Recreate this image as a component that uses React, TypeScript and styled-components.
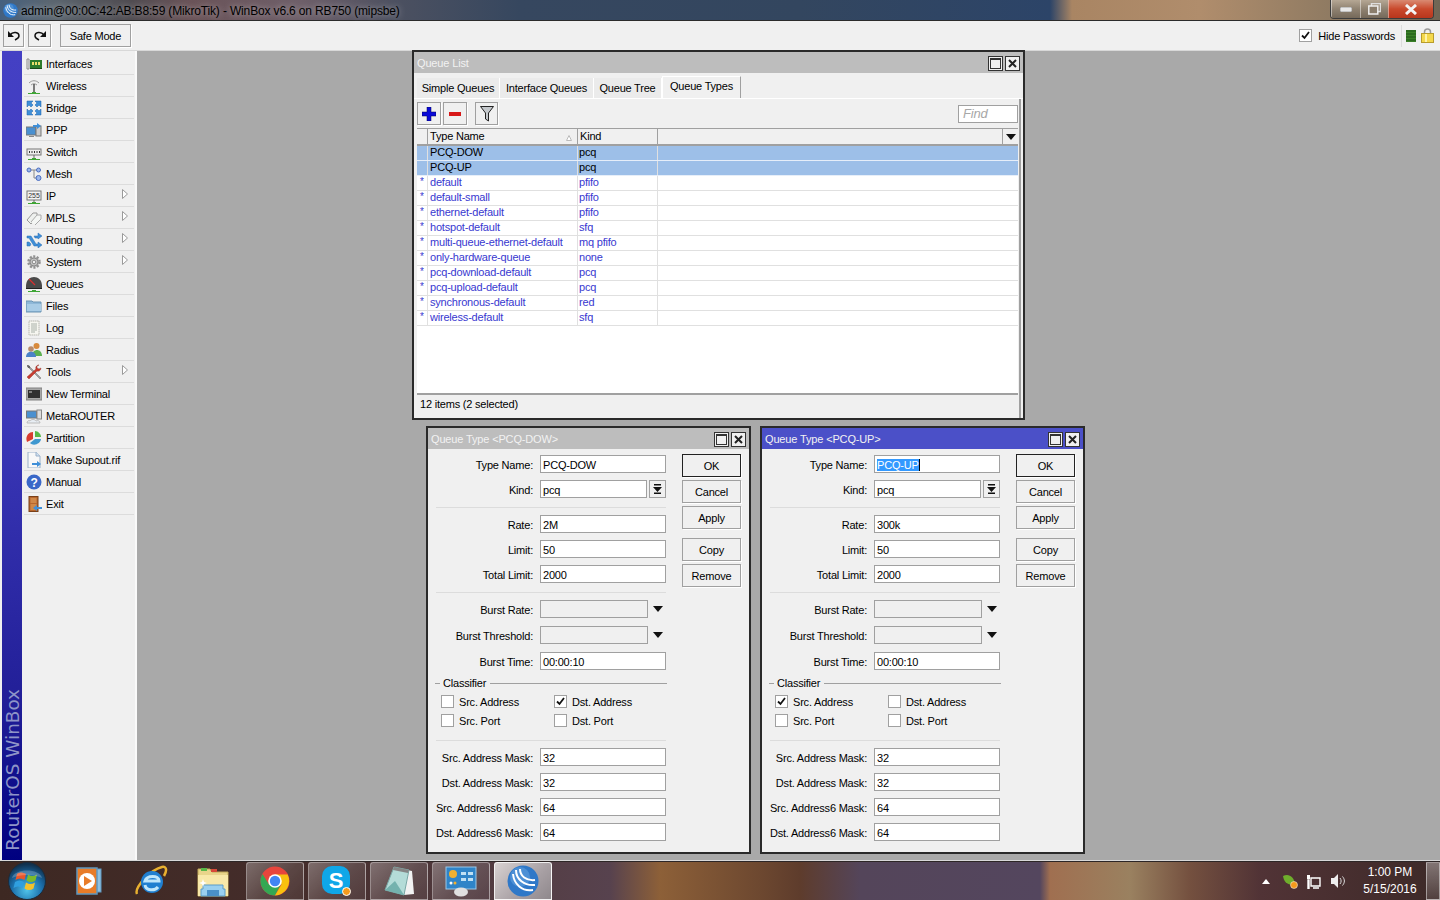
import { FC, ReactNode } from 'react'
import styled, { createGlobalStyle } from 'styled-components'

const GlobalStyle = createGlobalStyle`
  html, body { margin: 0; padding: 0; background: #a9a9a9; }
  body { font-family: "Liberation Sans", Arial, sans-serif; font-size: 11px; color: #000; }
`

const Root = styled.div`
  position: relative;
  width: 1440px;
  height: 900px;
  overflow: hidden;
  display: flex;
  flex-direction: column;
  letter-spacing: -0.2px;
`

/* ---------- host window chrome ---------- */

const TitleBar = styled.header`
  height: 20px;
  display: flex;
  align-items: center;
  gap: 3px;
  padding-left: 3px;
  border-bottom: 1px solid #2b2b2b;
  background: linear-gradient(90deg, #45607f 0, #5b6670 50px, #4f4b50 130px, #6a5358 190px, #6e5f69 300px, #4b5060 400px, #36475f 520px, #33465f 800px, #2c4468 1050px, #a98563 1072px, #b08d6c 1200px, #8e7a62 1335px, #6f6655 1440px);
`

const TitleText = styled.span`
  font-size: 12px;
  letter-spacing: -0.15px;
  padding-top: 1px;
  color: #000;
  text-shadow: 0 0 6px rgba(255, 255, 255, 0.55);
`

const CaptionButtons = styled.div`
  margin-left: auto;
  margin-right: 6px;
  align-self: flex-start;
  display: flex;
  height: 18px;
  border: 1px solid #3c3c3c;
  border-top: 0;
  border-radius: 0 0 4px 4px;
  overflow: hidden;
`

const CaptionButton = styled.div<{ $w: number; $close?: boolean }>`
  width: ${(p) => p.$w}px;
  display: flex;
  align-items: center;
  justify-content: center;
  border-left: 1px solid rgba(255, 255, 255, 0.45);
  background: ${(p) =>
    p.$close
      ? 'linear-gradient(180deg, #d98a72 0, #c9492c 50%, #b8361c 100%)'
      : 'linear-gradient(180deg, #b5a794 0, #8f8271 50%, #75695a 100%)'};
`

const TopToolbar = styled.div`
  height: 29px;
  display: flex;
  align-items: center;
  padding: 0 6px 0 3px;
  background: #f0f0f0;
  border-bottom: 1px solid #d8d8d8;
`

const ToolButton = styled.button<{ $w: number; $ml?: number }>`
  width: ${(p) => p.$w}px;
  height: 23px;
  margin-left: ${(p) => p.$ml ?? 0}px;
  padding: 0;
  display: flex;
  align-items: center;
  justify-content: center;
  font: inherit;
  letter-spacing: inherit;
  color: #000;
  background: #f0f0f0;
  border: 1px solid #a0a0a0;
  box-shadow: 1px 1px 0 #fff;
`

const HideGroup = styled.div`
  margin-left: auto;
  display: flex;
  align-items: center;
`

const Check = styled.span`
  width: 11px;
  height: 11px;
  flex: none;
  display: flex;
  align-items: center;
  justify-content: center;
  background: #fff;
  border: 1px solid #a0a0a0;
`

const HideLabel = styled.span`
  margin-left: 6px;
`

const ThinRule = styled.span`
  width: 1px;
  height: 22px;
  margin: 0 4px 0 6px;
  background: #dcdcdc;
`

const GreenBlock = styled.span`
  width: 10px;
  height: 12px;
  margin-right: 5px;
  background: repeating-linear-gradient(180deg, #2c6b1f 0, #2c6b1f 2px, #3b8028 2px, #3b8028 3px);
`

/* ---------- sidebar ---------- */

const Main = styled.div`
  flex: 1;
  display: flex;
  min-height: 0;
`

const Sidebar = styled.nav`
  width: 137px;
  flex: none;
  display: flex;
  background: #f0f0f0;
  padding-left: 2px;
  box-sizing: border-box;
  border-right: 2px solid #fafafa;
`

const BrandStrip = styled.div`
  width: 20px;
  flex: none;
  display: flex;
  flex-direction: column;
  justify-content: flex-end;
  align-items: center;
  padding-bottom: 9px;
  box-sizing: border-box;
  background: linear-gradient(180deg, #4440c4 0, #3b38b8 45%, #221f98 80%, #000080 100%);
`

const BrandText = styled.span`
  writing-mode: vertical-rl;
  transform: rotate(180deg);
  font-family: "DejaVu Sans", Verdana, sans-serif;
  font-size: 18.4px;
  letter-spacing: 0;
  color: #8f95c8;
  white-space: nowrap;
`

const Menu = styled.ul`
  flex: 1;
  list-style: none;
  margin: 2px 1px 0 2px;
  padding: 0;
`

const MenuRow = styled.li`
  height: 21px;
  display: flex;
  align-items: center;
  border-bottom: 1px solid #dcdcdc;
  padding-left: 2px;
`

const MenuIcon = styled.span`
  width: 16px;
  height: 16px;
  flex: none;
  display: flex;
  margin-right: 4px;
`

const SubArrow = styled.span`
  margin-left: auto;
  margin-right: 6px;
  margin-top: -4px;
  display: flex;
`

const Desktop = styled.div`
  flex: 1;
  background: #a9a9a9;
`

/* ---------- MDI windows ---------- */

const Win = styled.section<{ $x: number; $y: number; $w: number; $h: number }>`
  position: absolute;
  left: ${(p) => p.$x}px;
  top: ${(p) => p.$y}px;
  width: ${(p) => p.$w}px;
  height: ${(p) => p.$h}px;
  box-sizing: border-box;
  display: flex;
  flex-direction: column;
  background: #f0f0f0;
  border: 2px solid #2a2a2a;
`

const WinTitle = styled.div<{ $active?: boolean }>`
  height: 21px;
  flex: none;
  display: flex;
  align-items: center;
  gap: 2px;
  padding: 1px 3px 0 3px;
  box-sizing: border-box;
  background: ${(p) => (p.$active ? '#4b50c8' : '#bdbdbd')};
  color: #f2f2f2;
`

const WinTitleText = styled.span`
  flex: 1;
  letter-spacing: -0.15px;
`

const WinButton = styled.span`
  width: 15px;
  height: 15px;
  box-sizing: border-box;
  display: flex;
  align-items: center;
  justify-content: center;
  background: #f0f0f0;
  border: 1px solid #333;
`

/* ---------- queue list ---------- */

const Tabs = styled.div`
  height: 25px;
  flex: none;
  display: flex;
  align-items: flex-end;
  padding-left: 3px;
  border-bottom: 1px solid #fff;
`

const Tab = styled.div<{ $w: number; $active?: boolean }>`
  width: ${(p) => p.$w}px;
  height: ${(p) => (p.$active ? 22 : 20)}px;
  box-sizing: border-box;
  display: flex;
  align-items: ${(p) => (p.$active ? 'flex-start' : 'center')};
  padding-top: ${(p) => (p.$active ? 3 : 0)}px;
  justify-content: center;
  white-space: nowrap;
  background: ${(p) => (p.$active ? '#f0f0f0' : '#ebebeb')};
  border-right: 1px solid ${(p) => (p.$active ? '#a0a0a0' : '#fff')};
  border-top: ${(p) => (p.$active ? '1px solid #fff' : '0')};
  border-left: ${(p) => (p.$active ? '1px solid #fff' : '0')};
`

const ListPanel = styled.div`
  flex: 1;
  display: flex;
  flex-direction: column;
  min-height: 0;
  padding: 0 1px 5px 3px;
  margin-right: 2px;
  border-right: 2px solid #a0a0a0;
`

const ListToolbar = styled.div`
  height: 29px;
  flex: none;
  display: flex;
  align-items: center;
  box-sizing: border-box;
`

const FindBox = styled.div`
  width: 60px;
  height: 18px;
  margin-left: auto;
  box-sizing: border-box;
  padding-left: 4px;
  background: #fff;
  border: 1px solid #a0a0a0;
  font-style: italic;
  font-size: 13px;
  line-height: 15px;
  color: #a7a7a7;
`

const Table = styled.div`
  flex: 1;
  min-height: 0;
  display: flex;
  flex-direction: column;
  background: #fff;
`

const HeaderRow = styled.div`
  height: 18px;
  flex: none;
  box-sizing: border-box;
  display: grid;
  grid-template-columns: 11px 150px 80px 1fr 15px;
  background: #f0f0f0;
  border-top: 1px solid #a0a0a0;
  border-bottom: 2px solid #a0a0a0;
`

const HeaderCell = styled.div`
  position: relative;
  padding-left: 2px;
  line-height: 15px;
  border-right: 1px solid #a0a0a0;
  &:last-child { border-right: 0; }
`

const SortMark = styled.span`
  position: absolute;
  right: 5px;
  top: 6px;
  display: flex;
`

const MenuDrop = styled.div`
  display: flex;
  align-items: center;
  justify-content: center;
`

const DataRow = styled.div<{ $selected?: boolean }>`
  height: 15px;
  flex: none;
  box-sizing: border-box;
  display: grid;
  grid-template-columns: 11px 150px 80px 1fr;
  line-height: 13px;
  color: ${(p) => (p.$selected ? '#000' : '#3838d0')};
  background: ${(p) => (p.$selected ? '#9dbfe8' : '#fff')};
  border-bottom: 1px solid ${(p) => (p.$selected ? '#e6eef9' : '#e0e0e0')};
`

const DataCell = styled.div`
  padding-left: 2px;
  border-right: 1px solid #e0e0e0;
  white-space: nowrap;
  &:last-child { border-right: 0; }
`

const KindCell = styled(DataCell)`
  padding-left: 1px;
`

const Marker = styled.div`
  padding-left: 3px;
  font-size: 10px;
  line-height: 12px;
  border-right: 1px solid #e0e0e0;
`

const StatusBar = styled.div`
  height: 18px;
  flex: none;
  display: flex;
  align-items: center;
  padding-left: 3px;
  border-top: 2px solid #a0a0a0;
`

/* ---------- queue type dialog ---------- */

const DialogBody = styled.div`
  flex: 1;
  display: flex;
  min-height: 0;
  padding-top: 6px;
`

const Form = styled.div`
  width: 238px;
  flex: none;
  display: flex;
  flex-direction: column;
`

const FieldRow = styled.div<{ $mt?: number }>`
  height: 18px;
  flex: none;
  display: flex;
  align-items: center;
  margin-top: ${(p) => p.$mt ?? 0}px;
`

const Label = styled.label`
  width: 105px;
  flex: none;
  margin-right: 7px;
  padding-top: 2px;
  text-align: right;
  white-space: nowrap;
`

const Field = styled.div<{ $w?: number; $disabled?: boolean }>`
  width: ${(p) => p.$w ?? 126}px;
  height: 18px;
  flex: none;
  box-sizing: border-box;
  padding-left: 2px;
  line-height: 18px;
  white-space: nowrap;
  background: ${(p) => (p.$disabled ? '#f0f0f0' : '#fff')};
  border: 1px solid #a0a0a0;
`

const Selected = styled.span`
  background: #3399ff;
  color: #fff;
  border-right: 1px solid #000;
`

const DropButton = styled.span`
  width: 17px;
  height: 18px;
  margin-left: 2px;
  box-sizing: border-box;
  display: flex;
  align-items: center;
  justify-content: center;
  border: 1px solid #a0a0a0;
`

const DropCaret = styled.span`
  margin-left: 5px;
  display: flex;
`

const Rule = styled.div<{ $mt?: number }>`
  height: 1px;
  flex: none;
  margin: ${(p) => p.$mt ?? 9}px 0 7px 8px;
  width: 230px;
  background: #dcdcdc;
`

const LegendRow = styled.div`
  height: 14px;
  margin: 6px 0 0 7px;
  width: 232px;
  flex: none;
  display: flex;
  align-items: center;
  gap: 3px;
  &::before, &::after {
    content: '';
    height: 1px;
    background: #a0a0a0;
  }
  &::before { width: 5px; }
  &::after { flex: 1; margin-left: 1px; }
`

const CheckGrid = styled.div`
  display: grid;
  grid-template-columns: 113px 1fr;
  grid-auto-rows: 19px;
  margin: 2px 0 0 13px;
  flex: none;
`

const CheckItem = styled.div`
  display: flex;
  align-items: center;
  gap: 5px;
`

const ActionColumn = styled.div`
  width: 59px;
  margin: -1px 0 0 16px;
  flex: none;
  display: flex;
  flex-direction: column;
`

const ActionButton = styled.button<{ $mt?: number; $default?: boolean }>`
  height: 23px;
  flex: none;
  padding: 0;
  margin-top: ${(p) => p.$mt ?? 3}px;
  font: inherit;
  letter-spacing: inherit;
  color: #000;
  background: #f0f0f0;
  border: 1px solid ${(p) => (p.$default ? '#222' : '#a0a0a0')};
  box-shadow: 1px 1px 0 #fff;
`

/* ---------- taskbar ---------- */

const Taskbar = styled.footer`
  height: 40px;
  flex: none;
  box-sizing: border-box;
  display: flex;
  align-items: flex-end;
  gap: 4px;
  color: #fff;
  border-top: 1px solid #d8d8d8;
  box-shadow: inset 0 1px 0 #2d2626;
  background: linear-gradient(90deg, #3d2822 0, #452d2b 300px, #553f47 552px, #57424e 610px, #8d6038 660px, #6d4830 760px, #5e3c2c 800px, #54455a 860px, #54465e 1040px, #a06f50 1050px, #9a8160 1130px, #74503f 1190px, #513336 1260px, #3d2a28 1440px);
`

const StartSlot = styled.div`
  width: 56px;
  height: 38px;
  flex: none;
  display: flex;
  align-items: center;
  padding-left: 8px;
  box-sizing: border-box;
`

const TaskButton = styled.div<{ $boxed?: boolean; $active?: boolean }>`
  width: 58px;
  height: 38px;
  flex: none;
  box-sizing: border-box;
  display: flex;
  align-items: center;
  justify-content: center;
  ${(p) =>
    p.$boxed
      ? `border: 1px solid rgba(255,255,255,${p.$active ? 0.85 : 0.4}); border-radius: 3px 3px 0 0;`
      : ''}
  background: ${(p) =>
    p.$active
      ? 'linear-gradient(135deg, #d8d2d2 0, #a8a0a4 60%, #8f888c 100%)'
      : p.$boxed
        ? 'linear-gradient(135deg, rgba(255,255,255,0.3) 0, rgba(255,255,255,0.12) 55%, rgba(255,255,255,0.05) 100%)'
        : 'transparent'};
`

const Tray = styled.div`
  margin-left: auto;
  height: 38px;
  display: flex;
  align-items: center;
`

const TrayIcon = styled.span<{ $w: number }>`
  width: ${(p) => p.$w}px;
  display: flex;
  justify-content: center;
`

const Clock = styled.div`
  width: 72px;
  margin-left: 4px;
  text-align: center;
  font-size: 12px;
  line-height: 17px;
  letter-spacing: 0;
`

const ShowDesktop = styled.div`
  width: 14px;
  height: 38px;
  box-sizing: border-box;
  border: 1px solid rgba(255, 255, 255, 0.45);
  background: linear-gradient(180deg, rgba(255, 255, 255, 0.35), rgba(255, 255, 255, 0.1));
`

/* ---------- drawings ---------- */

const Ico: FC<{ s?: number; w?: number; h?: number; children: ReactNode }> = ({ s = 16, w, h, children }) => (
  <svg width={w ?? s} height={h ?? s} viewBox={`0 0 ${w ?? s} ${h ?? s}`}>{children}</svg>
)

const GreenBase = () => <path d="M2 15h12v1H2z M6 14h4v2H6z" fill="#3fa535" />

const menuIcons: Record<string, ReactNode> = {
  Interfaces: (
    <Ico>
      <path d="M1 3h2v10H1z" fill="none" stroke="#8a8a8a" />
      <rect x="4" y="4" width="12" height="8" fill="#2c7a2c" />
      <path d="M6 6h2v3H6zM9 6h2v3H9zM12 6h2v3h-2z" fill="#e8dd6a" />
      <path d="M4 12h12v1H4z" fill="#184a18" />
    </Ico>
  ),
  Wireless: (
    <Ico>
      <path d="M3 5c3-3 7-3 10 0M5 7c2-1.600 4-1.600 6 0" fill="none" stroke="#9a9a9a" />
      <path d="M8 6v8" stroke="#555" strokeWidth="1.500" />
      <GreenBase />
    </Ico>
  ),
  Bridge: (
    <Ico>
      <path d="M1 1h6L5 3l2 2-2 2-2-2-2 2zM15 1v6l-2-2-2 2-2-2 2-2-2-2zM1 15V9l2 2 2-2 2 2-2 2 2 2zM15 15H9l2-2-2-2 2-2 2 2 2-2z" fill="#3f8fd8" stroke="#1e62a8" strokeWidth="0.500" />
    </Ico>
  ),
  PPP: (
    <Ico>
      <rect x="0" y="5" width="10" height="8" fill="#4a90d0" stroke="#777" />
      <rect x="10" y="4" width="5" height="10" fill="#ccc" stroke="#777" />
      <path d="M3 14h5v1H3z" fill="#888" />
      <path d="M7 3h4V1l4 3-4 3V5H7z" fill="#3f8fd8" />
    </Ico>
  ),
  Switch: (
    <Ico>
      <rect x="1" y="5" width="14" height="6" fill="#eee" stroke="#777" />
      <path d="M3 7h1v2H3zM5.500 7h1v2h-1zM8 7h1v2H8zM10.500 7h1v2h-1zM13 7h1v2h-1z" fill="#333" />
      <path d="M8 11v3" stroke="#666" />
      <GreenBase />
    </Ico>
  ),
  Mesh: (
    <Ico>
      <path d="M4 4h4v8h4M8 4h4" fill="none" stroke="#888" />
      <circle cx="3" cy="4" r="2" fill="#9db8ea" stroke="#4a6cc0" />
      <circle cx="12.500" cy="4" r="2" fill="#9db8ea" stroke="#4a6cc0" />
      <circle cx="12.500" cy="12" r="2.500" fill="#9db8ea" stroke="#4a6cc0" />
    </Ico>
  ),
  IP: (
    <Ico>
      <rect x="1" y="3" width="14" height="9" fill="#f4f4f4" stroke="#777" />
      <text x="8" y="10" textAnchor="middle" fontSize="7" letterSpacing="0" fill="#333" fontFamily="Liberation Sans">255</text>
      <path d="M8 12v2" stroke="#666" />
      <GreenBase />
    </Ico>
  ),
  MPLS: (
    <Ico>
      <path d="M1 10l6-7h4v4l-6 7z" fill="#eef0ee" stroke="#999" />
      <path d="M5 12l6-7h4v4l-6 6" fill="#f4f6f4" stroke="#aaa" />
    </Ico>
  ),
  Routing: (
    <Ico>
      <path d="M1 4h4l5 8h2v-2l4 3-4 3v-2H8L3 6H1z" fill="#3f8fd8" stroke="#2a6cb0" strokeWidth="0.500" />
      <path d="M1 10h2l2 2-1 2H1zM8 4h4V1l4 3-4 3V6h-3z" fill="#3f8fd8" stroke="#2a6cb0" strokeWidth="0.500" />
    </Ico>
  ),
  System: (
    <Ico>
      <circle cx="8" cy="8" r="5.500" fill="#c8c8c8" stroke="#909090" strokeWidth="2.500" strokeDasharray="2 1.500" />
      <circle cx="8" cy="8" r="4" fill="#c4c4c4" stroke="#8a8a8a" />
      <circle cx="8" cy="8" r="1.800" fill="#eee" stroke="#8a8a8a" />
    </Ico>
  ),
  Queues: (
    <Ico>
      <path d="M0 10C0-2 16-2 16 10v3H0z" fill="#4a4a4a" />
      <path d="M3 3l6 6" stroke="#d83030" strokeWidth="1.200" />
      <path d="M0 12h16v1H0z" fill="#222" />
      <GreenBase />
    </Ico>
  ),
  Files: (
    <Ico>
      <path d="M0 3h6l1 1h8v10H0z" fill="#8fb8d8" stroke="#6a94b4" />
      <path d="M1 6h14v7H1z" fill="#a9cce6" />
    </Ico>
  ),
  Log: (
    <Ico>
      <path d="M3 1h10v14H3z" fill="#f6f6f0" stroke="#b8b8b0" strokeDasharray="1.500 .5" />
      <path d="M5 4h6M5 6h6M5 8h6M5 10h6M5 12h4" stroke="#a8b0a8" />
    </Ico>
  ),
  Radius: (
    <Ico>
      <circle cx="10.500" cy="4" r="3" fill="#d88a3c" />
      <path d="M6 14c0-8 10-8 10 0z" fill="#5cb050" />
      <circle cx="5" cy="7" r="2.800" fill="#b88a6a" />
      <path d="M0 15c0-7 10-7 10 0z" fill="#4a82c8" />
    </Ico>
  ),
  Tools: (
    <Ico>
      <path d="M2 1l13 13-1 1L1 2z" fill="#a0a0a0" stroke="#777" strokeWidth="0.500" />
      <path d="M1 1l3 1v2H2z" fill="#666" />
      <path d="M13 1c-2 0-4 2-3 4L1 13l2 2 8-8c3 1 4-2 4-3l-2 1-2-1 0-2z" fill="#c83c30" stroke="#8a2a20" strokeWidth="0.400" />
    </Ico>
  ),
  'New Terminal': (
    <Ico>
      <rect x="0" y="2" width="16" height="12" fill="#a8a8a8" stroke="#808080" />
      <rect x="2" y="4" width="12" height="8" fill="#303030" />
      <path d="M3 6h3" stroke="#ccc" />
    </Ico>
  ),
  MetaROUTER: (
    <Ico>
      <rect x="0.500" y="3" width="10" height="7" fill="#4a90d0" stroke="#777" />
      <rect x="11" y="2" width="4.500" height="9" fill="#ddd" stroke="#888" />
      <path d="M1 15c0-2 2-3 3-2 1-2 5-2 6 0 2-1 4 0 4 2z" fill="#e8eef4" stroke="#bbb" />
    </Ico>
  ),
  Partition: (
    <Ico>
      <path d="M7 2v7l-6 3C-1 7 2 2 7 2z" fill="#d83c30" />
      <path d="M9 1c3 0 6 3 6 6H9z" fill="#58b848" />
      <path d="M15 9c0 4-7 8-11 4l5-4z" fill="#3f98d0" />
    </Ico>
  ),
  'Make Supout.rif': (
    <Ico>
      <path d="M2 0h8l4 4v12H2z" fill="#f8f8f8" stroke="#9ab0c8" />
      <path d="M10 0v4h4" fill="#cfe0f0" stroke="#9ab0c8" />
      <path d="M6 11h5V9l4 3-4 3v-2H6z" fill="#3f8fd8" />
    </Ico>
  ),
  Manual: (
    <Ico>
      <circle cx="8" cy="8" r="7.500" fill="#3a68c8" />
      <text x="8" y="12.500" textAnchor="middle" fontSize="12" fontWeight="700" fill="#fff" fontFamily="Liberation Sans">?</text>
    </Ico>
  ),
  Exit: (
    <Ico>
      <rect x="3" y="0.500" width="9" height="15" fill="#b8662c" stroke="#7a4018" />
      <rect x="4.500" y="2" width="6" height="5" fill="#d08848" />
      <rect x="4.500" y="8" width="6" height="6" fill="#d08848" />
      <path d="M16 11h-5V9l-4 3 4 3v-2h5z" fill="#3f8fd8" />
    </Ico>
  ),
}

const UndoIcon = () => (
  <Ico s={14}>
    <path d="M3 6c3-4 9-3 9 1 0 2-2 3-4 4" fill="none" stroke="#111" strokeWidth="1.500" />
    <path d="M1 2v6h6z" fill="#111" />
  </Ico>
)

const RedoIcon = () => (
  <Ico s={14}>
    <path d="M11 6C8 2 2 3 2 7c0 2 2 3 4 4" fill="none" stroke="#111" strokeWidth="1.500" />
    <path d="M13 2v6H7z" fill="#111" />
  </Ico>
)

const CheckMark = () => (
  <svg width="9" height="9" viewBox="0 0 9 9"><path d="M1 4.500l2.500 2.500L8 1" fill="none" stroke="#111" strokeWidth="1.800" /></svg>
)

const MaxGlyph = () => (
  <svg width="11" height="11" viewBox="0 0 11 11"><rect x="0.500" y="0.500" width="10" height="10" fill="none" stroke="#333" /><path d="M0 1h11" stroke="#333" strokeWidth="2" /></svg>
)

const CloseGlyph = () => (
  <svg width="9" height="9" viewBox="0 0 9 9"><path d="M1 1l7 7M8 1l-7 7" stroke="#222" strokeWidth="2" /></svg>
)

const DownCaret = () => (
  <svg width="10" height="6" viewBox="0 0 10 6"><path d="M0 0h10L5 6z" fill="#111" /></svg>
)

const DropGlyph = () => (
  <svg width="9" height="10" viewBox="0 0 9 10"><path d="M1 0h7v1.500H1zM0 3h9L4.500 8z" fill="#111" /><path d="M3 3h3v3H3zM1 8.500h7V10H1z" fill="#111" /></svg>
)

const WinboxLogo: FC<{ s: number }> = ({ s }) => (
  <svg width={s} height={s} viewBox="0 0 32 32">
    <circle cx="16" cy="16" r="15.500" fill="#2f78c8" />
    <circle cx="13" cy="12" r="10" fill="#6aa8e4" opacity="0.500" />
    <path d="M9 5c0 9 8 16 19 15M6 9c1 10 9 18 20 16M13 4c0 7 6 12 15 11" fill="none" stroke="#fff" strokeWidth="2" />
  </svg>
)

const StartOrb = () => (
  <svg width="38" height="38" viewBox="0 0 38 38">
    <defs>
      <radialGradient id="orb" cx="50%" cy="75%" r="70%">
        <stop offset="0" stopColor="#4fc3ea" />
        <stop offset="0.600" stopColor="#1a6ca8" />
        <stop offset="1" stopColor="#10324f" />
      </radialGradient>
    </defs>
    <circle cx="19" cy="19" r="18.500" fill="url(#orb)" stroke="#1c2c3c" />
    <path d="M9 12c3-2 5-2 9 0l-1.500 6c-3-2-6-2-9 0z" fill="#e8562a" />
    <path d="M20 12.500c3 2 6 2 9 0l-1.500 6c-3 2-6 2-9 0z" fill="#7cba2c" />
    <path d="M7 20c3-2 6-2 9 0l-1.500 6c-3-2-6-2-9 0z" fill="#2f9fe0" />
    <path d="M18 20.500c3 2 6 2 9 0l-1.500 6c-3 2-6 2-9 0z" fill="#f4c22c" />
    <path d="M4 16C6 6 32 6 34 16 26 12 12 12 4 16z" fill="#fff" opacity="0.220" />
  </svg>
)

const MediaIcon = () => (
  <Ico w={26} h={28}>
    <rect x="6" y="2" width="19" height="23" fill="#8fc0e0" stroke="#5f98c0" />
    <rect x="1" y="1" width="20" height="26" fill="#e87c28" stroke="#5f98c0" strokeWidth="1.500" />
    <circle cx="11" cy="14" r="8" fill="#fff" />
    <path d="M8 9l8 5-8 5z" fill="#e87c28" />
  </Ico>
)

const IeIcon = () => (
  <svg width="34" height="34" viewBox="0 0 34 34">
    <path d="M3 30C0 24 16 6 28 3c5-1 5 4 2 9" fill="none" stroke="#e8b030" strokeWidth="2.500" />
    <circle cx="18" cy="18" r="11" fill="#1f7fd0" />
    <path d="M11 17h14c0-6-12-6-14 0zM11 21c1 6 10 6 13 2" fill="none" stroke="#bfe6fa" strokeWidth="3" />
  </svg>
)

const FolderIcon = () => (
  <svg width="32" height="32" viewBox="0 0 32 32">
    <path d="M1 4h12l2 3h16v24H1z" fill="#e8d48a" stroke="#c0a858" />
    <path d="M4 3h6v3H4z" fill="#58b848" />
    <path d="M14 4h6v3h-6z" fill="#d84838" />
    <path d="M1 10h30v21H1z" fill="#f8e8a8" />
    <path d="M6 20h20v4h2v7H4v-7h2z" fill="#9ad0f0" stroke="#5a9cc8" />
    <path d="M10 25h12v6H10z" fill="#4a90c8" />
    <path d="M6 14l1 3 3 1-3 1-1 3-1-3-3-1 3-1z" fill="#fff" />
  </svg>
)

const ChromeIcon = () => (
  <svg width="30" height="30" viewBox="0 0 30 30">
    <circle cx="15" cy="15" r="14.500" fill="#e8453c" />
    <path d="M15 15L2.400 22.300A14.500 14.500 0 0 0 15 29.500L21.500 17z" fill="#34a853" />
    <path d="M15 8.500h12.600A14.500 14.500 0 0 1 15 29.500l6.500-11z" fill="#f9c10e" />
    <path d="M2.500 8l6.800 11L2.400 22.300A14.500 14.500 0 0 1 2.500 8z" fill="#34a853" />
    <circle cx="15" cy="15" r="6.800" fill="#fff" />
    <circle cx="15" cy="15" r="5.200" fill="#4285f4" />
  </svg>
)

const SkypeIcon = () => (
  <svg width="32" height="32" viewBox="0 0 32 32">
    <rect x="1" y="1" width="28" height="28" rx="10" fill="#0fa7e8" />
    <text x="15" y="23" textAnchor="middle" fontSize="22" fontWeight="700" fill="#fff" fontFamily="Liberation Sans">S</text>
    <circle cx="25.500" cy="26.500" r="4" fill="#f59a1c" stroke="#fff" />
  </svg>
)

const NotepadIcon = () => (
  <svg width="32" height="32" viewBox="0 0 32 32">
    <path d="M24 5l5 1 2 23-10 1z" fill="#f2f2f2" />
    <path d="M11 2l15 3-5 25L2 25z" fill="#b4dcd8" stroke="#7aa8a6" />
    <path d="M2 25l10-9 9 14z" fill="#74b2ae" />
    <path d="M11 2l15 3-1 3-15-3z" fill="#858585" />
  </svg>
)

const ControlIcon = () => (
  <svg width="32" height="32" viewBox="0 0 32 32">
    <rect x="1" y="2" width="30" height="22" fill="#2f84c8" stroke="#9cc8e8" />
    <circle cx="8" cy="9" r="4" fill="#f0b030" />
    <path d="M16 7h5v3h-5zM23 7h5v3h-5zM16 13h5v3h-5zM23 13h5v3h-5z" fill="#bfe0f4" />
    <circle cx="6" cy="18" r="1.500" fill="#fff" />
    <circle cx="10" cy="18" r="1.500" fill="#f0b030" />
    <ellipse cx="16" cy="27" rx="7" ry="4.500" fill="#e0e0e0" />
  </svg>
)

const LockIcon = () => (
  <svg width="13" height="15" viewBox="0 0 13 15">
    <path d="M3.500 6V4a3 3 0 0 1 6 0V6" fill="none" stroke="#9a9a9a" strokeWidth="1.500" />
    <rect x="0.500" y="5.500" width="12" height="9" fill="#f4d84c" stroke="#b89c2c" />
    <path d="M5 6v8" stroke="#fff3a8" strokeWidth="2" />
  </svg>
)

const SubTriangle = () => (
  <svg width="6" height="10" viewBox="0 0 6 10"><path d="M.5.500l5 4.500-5 4.500z" fill="#fff" stroke="#9a9a9a" /></svg>
)

/* ---------- data ---------- */

const menuItems: { name: string; sub?: boolean }[] = [
  { name: 'Interfaces' },
  { name: 'Wireless' },
  { name: 'Bridge' },
  { name: 'PPP' },
  { name: 'Switch' },
  { name: 'Mesh' },
  { name: 'IP', sub: true },
  { name: 'MPLS', sub: true },
  { name: 'Routing', sub: true },
  { name: 'System', sub: true },
  { name: 'Queues' },
  { name: 'Files' },
  { name: 'Log' },
  { name: 'Radius' },
  { name: 'Tools', sub: true },
  { name: 'New Terminal' },
  { name: 'MetaROUTER' },
  { name: 'Partition' },
  { name: 'Make Supout.rif' },
  { name: 'Manual' },
  { name: 'Exit' },
]

const queueRows = [
  ['PCQ-DOW', 'pcq', 'sel'],
  ['PCQ-UP', 'pcq', 'sel'],
  ['default', 'pfifo'],
  ['default-small', 'pfifo'],
  ['ethernet-default', 'pfifo'],
  ['hotspot-default', 'sfq'],
  ['multi-queue-ethernet-default', 'mq pfifo'],
  ['only-hardware-queue', 'none'],
  ['pcq-download-default', 'pcq'],
  ['pcq-upload-default', 'pcq'],
  ['synchronous-default', 'red'],
  ['wireless-default', 'sfq'],
]

const WinControls = () => (
  <>
    <WinButton><MaxGlyph /></WinButton>
    <WinButton><CloseGlyph /></WinButton>
  </>
)

const CheckField: FC<{ on?: boolean; label: string }> = ({ on, label }) => (
  <CheckItem>
    <Check>{on && <CheckMark />}</Check>
    {label}
  </CheckItem>
)

type DialogProps = {
  x: number
  name: string
  rate: string
  active?: boolean
  src?: boolean
  dst?: boolean
}

const QueueDialog: FC<DialogProps> = ({ x, name, rate, active, src, dst }) => (
  <Win $x={x} $y={426} $w={325} $h={428}>
    <WinTitle $active={active}>
      <WinTitleText>{`Queue Type <${name}>`}</WinTitleText>
      <WinControls />
    </WinTitle>
    <DialogBody>
      <Form>
        <FieldRow>
          <Label>Type Name:</Label>
          <Field>{active ? <Selected>{name}</Selected> : name}</Field>
        </FieldRow>
        <FieldRow $mt={7}>
          <Label>Kind:</Label>
          <Field $w={107}>pcq</Field>
          <DropButton><DropGlyph /></DropButton>
        </FieldRow>
        <Rule />
        <FieldRow>
          <Label>Rate:</Label>
          <Field>{rate}</Field>
        </FieldRow>
        <FieldRow $mt={7}>
          <Label>Limit:</Label>
          <Field>50</Field>
        </FieldRow>
        <FieldRow $mt={7}>
          <Label>Total Limit:</Label>
          <Field>2000</Field>
        </FieldRow>
        <Rule />
        <FieldRow>
          <Label>Burst Rate:</Label>
          <Field $w={108} $disabled />
          <DropCaret><DownCaret /></DropCaret>
        </FieldRow>
        <FieldRow $mt={8}>
          <Label>Burst Threshold:</Label>
          <Field $w={108} $disabled />
          <DropCaret><DownCaret /></DropCaret>
        </FieldRow>
        <FieldRow $mt={8}>
          <Label>Burst Time:</Label>
          <Field>00:00:10</Field>
        </FieldRow>
        <LegendRow>Classifier</LegendRow>
        <CheckGrid>
          <CheckField on={src} label="Src. Address" />
          <CheckField on={dst} label="Dst. Address" />
          <CheckField label="Src. Port" />
          <CheckField label="Dst. Port" />
        </CheckGrid>
        <Rule $mt={10} />
        <FieldRow>
          <Label>Src. Address Mask:</Label>
          <Field>32</Field>
        </FieldRow>
        <FieldRow $mt={7}>
          <Label>Dst. Address Mask:</Label>
          <Field>32</Field>
        </FieldRow>
        <FieldRow $mt={7}>
          <Label>Src. Address6 Mask:</Label>
          <Field>64</Field>
        </FieldRow>
        <FieldRow $mt={7}>
          <Label>Dst. Address6 Mask:</Label>
          <Field>64</Field>
        </FieldRow>
      </Form>
      <ActionColumn>
        <ActionButton $mt={0} $default>OK</ActionButton>
        <ActionButton>Cancel</ActionButton>
        <ActionButton>Apply</ActionButton>
        <ActionButton $mt={9}>Copy</ActionButton>
        <ActionButton>Remove</ActionButton>
      </ActionColumn>
    </DialogBody>
  </Win>
)

const App: FC = () => (
  <Root>
    <GlobalStyle />

    <TitleBar>
      <WinboxLogo s={15} />
      <TitleText>admin@00:0C:42:AB:B8:59 (MikroTik) - WinBox v6.6 on RB750 (mipsbe)</TitleText>
      <CaptionButtons>
        <CaptionButton $w={28}>
          <svg width="12" height="5" viewBox="0 0 12 5"><rect width="12" height="5" rx="1" fill="#e8e8e8" stroke="#555" strokeWidth="0.500" /></svg>
        </CaptionButton>
        <CaptionButton $w={27}>
          <svg width="13" height="12" viewBox="0 0 13 12"><rect x="3.500" y="0.500" width="9" height="8" fill="none" stroke="#ddd" strokeWidth="1.500" /><rect x="0.800" y="3" width="9" height="8" fill="#8a7d6c" stroke="#eee" strokeWidth="1.500" /></svg>
        </CaptionButton>
        <CaptionButton $w={44} $close>
          <svg width="14" height="11" viewBox="0 0 14 11"><path d="M2 1l10 9M12 1L2 10" stroke="#f4f4f4" strokeWidth="3" /></svg>
        </CaptionButton>
      </CaptionButtons>
    </TitleBar>

    <TopToolbar>
      <ToolButton $w={21}><UndoIcon /></ToolButton>
      <ToolButton $w={23} $ml={4}><RedoIcon /></ToolButton>
      <ToolButton $w={71} $ml={9}>Safe Mode</ToolButton>
      <HideGroup>
        <Check><CheckMark /></Check>
        <HideLabel>Hide Passwords</HideLabel>
        <ThinRule />
        <GreenBlock />
        <LockIcon />
      </HideGroup>
    </TopToolbar>

    <Main>
      <Sidebar>
        <BrandStrip>
          <BrandText>RouterOS WinBox</BrandText>
        </BrandStrip>
        <Menu>
          {menuItems.map((m) => (
            <MenuRow key={m.name}>
              <MenuIcon>{menuIcons[m.name]}</MenuIcon>
              {m.name}
              {m.sub && <SubArrow><SubTriangle /></SubArrow>}
            </MenuRow>
          ))}
        </Menu>
      </Sidebar>
      <Desktop />
    </Main>

    <Win $x={412} $y={50} $w={613} $h={370}>
      <WinTitle>
        <WinTitleText>Queue List</WinTitleText>
        <WinControls />
      </WinTitle>
      <Tabs>
        <Tab $w={83}>Simple Queues</Tab>
        <Tab $w={94}>Interface Queues</Tab>
        <Tab $w={68}>Queue Tree</Tab>
        <Tab $w={79} $active>Queue Types</Tab>
      </Tabs>
      <ListPanel>
        <ListToolbar>
          <ToolButton $w={24}>
            <svg width="14" height="14" viewBox="0 0 14 14"><path d="M5 0h4v5h5v4H9v5H5V9H0V5h5z" fill="#0a0ad8" stroke="#000050" strokeWidth="0.500" /></svg>
          </ToolButton>
          <ToolButton $w={24} $ml={2}>
            <svg width="12" height="4" viewBox="0 0 12 4"><rect width="12" height="4" fill="#d81818" /></svg>
          </ToolButton>
          <ToolButton $w={23} $ml={8}>
            <svg width="14" height="16" viewBox="0 0 14 16"><path d="M.5.500h13L8.500 7v8l-3-2V7z" fill="#c4c8cc" stroke="#222" /></svg>
          </ToolButton>
          <FindBox>Find</FindBox>
        </ListToolbar>
        <Table>
          <HeaderRow>
            <HeaderCell />
            <HeaderCell>
              Type Name
              <SortMark><svg width="6" height="6" viewBox="0 0 6 6"><path d="M3 .5L.5 5.500h5z" fill="#fff" stroke="#bbb" /></svg></SortMark>
            </HeaderCell>
            <HeaderCell>Kind</HeaderCell>
            <HeaderCell />
            <MenuDrop><DownCaret /></MenuDrop>
          </HeaderRow>
          {queueRows.map(([name, kind, sel]) => (
            <DataRow key={name} $selected={sel === 'sel'}>
              <Marker>{sel === 'sel' ? '' : '*'}</Marker>
              <DataCell>{name}</DataCell>
              <KindCell>{kind}</KindCell>
              <DataCell />
            </DataRow>
          ))}
        </Table>
        <StatusBar>12 items (2 selected)</StatusBar>
      </ListPanel>
    </Win>

    <QueueDialog x={426} name="PCQ-DOW" rate="2M" dst />
    <QueueDialog x={760} name="PCQ-UP" rate="300k" active src />

    <Taskbar>
      <StartSlot><StartOrb /></StartSlot>
      <TaskButton><MediaIcon /></TaskButton>
      <TaskButton><IeIcon /></TaskButton>
      <TaskButton><FolderIcon /></TaskButton>
      <TaskButton $boxed><ChromeIcon /></TaskButton>
      <TaskButton $boxed><SkypeIcon /></TaskButton>
      <TaskButton $boxed><NotepadIcon /></TaskButton>
      <TaskButton $boxed><ControlIcon /></TaskButton>
      <TaskButton $boxed $active><WinboxLogo s={32} /></TaskButton>
      <Tray>
        <TrayIcon $w={24}>
          <svg width="8" height="5" viewBox="0 0 8 5"><path d="M4 0l4 5H0z" fill="#fff" /></svg>
        </TrayIcon>
        <TrayIcon $w={24}>
          <svg width="16" height="16" viewBox="0 0 16 16"><path d="M1 3c6-3 11 1 12 8-6 2-11-1-12-8z" fill="#6fae2c" /><circle cx="12" cy="12" r="3.500" fill="#f59a1c" stroke="#fff" strokeWidth="0.500" /></svg>
        </TrayIcon>
        <TrayIcon $w={24}>
          <svg width="14" height="15" viewBox="0 0 14 15"><path d="M1 6h1v9H1zM4 4h9v8H4zM6 14h6" fill="none" stroke="#fff" strokeWidth="1.400" /><path d="M0 1h3v4H0z" fill="#fff" /></svg>
        </TrayIcon>
        <TrayIcon $w={24}>
          <svg width="15" height="14" viewBox="0 0 15 14"><path d="M0 4h3l4-4v14l-4-4H0z" fill="#eee" /><path d="M9 4c1.500 2 1.500 4 0 6M11.500 2.500c2.500 3 2.500 6 0 9" fill="none" stroke="#ddd" /></svg>
        </TrayIcon>
        <Clock>
          1:00 PM
          <br />
          5/15/2016
        </Clock>
        <ShowDesktop />
      </Tray>
    </Taskbar>
  </Root>
)

export default App
